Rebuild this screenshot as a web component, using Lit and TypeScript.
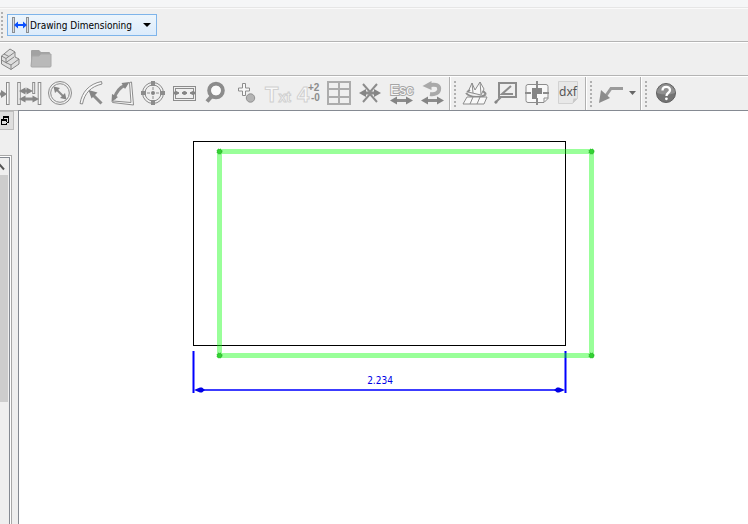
import { LitElement, html, svg, css, SVGTemplateResult } from "lit";
import { customElement, property } from "lit/decorators.js";

type Icon = { label: string; art: SVGTemplateResult };

/* Horizontal double-headed arrow between two x positions. */
const doubleArrow = (x1: number, x2: number, y: number, h = 4) => svg`
  <path class="line bold" d="M${x1 + 5} ${y}H${x2 - 5}"/>
  <path class="solid" d="M${x1} ${y}l${h + 3} ${-h}v${2 * h}zM${x2} ${y}l${-h - 3} ${-h}v${2 * h}z"/>`;

const dimensionIcons: Icon[] = [
  { label: "Linear dimension", art: svg`
    <path class="line bold" d="M16 17h5"/><path class="solid" d="M24 17l-6-4v8z"/>
    <rect class="hollow" x="23.5" y="5.5" width="2.6" height="22"/>` },
  { label: "Chained dimension", art: svg`
    <rect class="hollow" x="3.7" y="5.5" width="2.6" height="22"/>
    <rect class="hollow" x="24.2" y="5.5" width="2.6" height="22"/>
    <rect class="hollow" x="18.7" y="5.5" width="2" height="11"/>
    ${doubleArrow(5, 19, 14, 3.5)}${doubleArrow(5, 25, 22, 3.5)}` },
  { label: "Diameter", art: svg`
    <circle class="line" cx="15" cy="16" r="11.5"/><circle class="line" cx="15" cy="16" r="9.3"/>
    <path class="line thick" d="M10 11l10 10"/>
    <path class="solid" d="M8.5 9.5l6.5 1.5-5 5zM21.5 22.5l-6.5-1.5 5-5z"/>` },
  { label: "Radius", art: svg`
    <path class="hollow" d="M4 26.5C6 15 13 7 25.5 4.5l.5 2.5C15 9.5 8.5 16 6.5 27z"/>
    <path class="line bold" d="M25.5 26.5L17 18"/><path class="solid" d="M12.5 13l9 2.5-6 6z"/>` },
  { label: "Angle", art: svg`
    <path class="hollow" d="M22.5 5.5l2-.5 2 23-21-2.5.5-1.5 18 1.5z"/>
    <path class="line bold" d="M7 22C9 15 13 10 19 8"/>
    <path class="solid" d="M4.5 25l.5-8 6 3zM22.5 5l-8 1 3.5 6z"/>` },
  { label: "Center mark", art: svg`
    <circle class="line" cx="15" cy="16" r="10.5"/><circle class="line" cx="15" cy="16" r="8"/>
    <path class="line" d="M15 10v3M15 19v3M9 16h3M18 16h3"/>
    <path class="line heavy" d="M15 4v5M15 23v5M3 16h5M22 16h5"/><circle class="solid" cx="15" cy="16" r="2"/>` },
  { label: "Center line", art: svg`
    <rect class="line" x="4.5" y="9.5" width="22" height="14"/><rect class="line" x="6.5" y="11.5" width="18" height="10"/>
    <path class="line thick" d="M4 16h6m3 0h5m3 0h6"/>
    <circle class="solid" cx="7" cy="16" r="2"/><circle class="solid" cx="15.5" cy="16" r="2"/><circle class="solid" cx="24" cy="16" r="2"/>` },
  { label: "Weld symbol", art: svg`
    <path class="line heavy" d="M11 20l-4 4.5"/><circle class="line heavy" cx="16" cy="13.5" r="6.8"/>
    <circle class="shine" cx="16" cy="13.5" r="4.8"/>` },
  { label: "Add point", art: svg`
    <path class="hollow" d="M11.5 6.5h3v4.5h4v3h-4v4.5h-3v-4.5h-4v-3h4z"/>
    <circle class="soft" cx="19.5" cy="21" r="4.2"/>` },
  { label: "Add text", art: svg`
    <text class="ghost" x="3" y="25"><tspan class="large">T</tspan><tspan class="small">xt</tspan></text>` },
  { label: "Add tolerance", art: svg`
    <text x="4" y="25"><tspan class="ghost large">4</tspan><tspan class="tolerance" x="15" y="14">+2</tspan><tspan class="tolerance" x="18" y="24">-0</tspan></text>` },
  { label: "Table", art: svg`
    <path class="line grid" d="M4 5h22v22H4zM15 5v22M4 12h22M4 20h22"/>` },
  { label: "Delete dimension", art: svg`
    <path class="line thick" d="M8 7l7 8 7-8M8 25l7-8 7 8"/>${doubleArrow(4, 26, 16)}` },
  { label: "Escape dimensioning", art: svg`
    <text class="ghost escape" x="4" y="18">Esc</text>${doubleArrow(4, 27, 23.5)}` },
  { label: "Undo dimension", art: svg`
    <path class="line heavy pale" d="M13 8c6-1 10 0 9 5-1 4-6 4.5-9 4"/>
    <path class="solid pale" d="M5.5 9l9-5v9z"/>${doubleArrow(4, 27, 23.5)}` },
];

const annotationIcons: Icon[] = [
  { label: "Unfold", art: svg`
    <path class="hollow" d="M8 15l4-9 3 7 5-8 4 7-3 6z"/><path class="line" d="M12 6l1 10M20 5l1 12"/>
    <path class="line thick" d="M6 16c4 5 16 5 20 1M7 15l3-2M26 17l-3-3"/>
    <path class="hollow" d="M7 20h20l-3 7H3z"/><path class="line" d="M13 20l-3 7M20 20l-3 7"/>` },
  { label: "Shape view", art: svg`
    <path class="line thick" d="M8 6h17v14H8zM4 26l6-6"/><path class="line thick" d="M20 9l-9 8h11"/>
    <circle class="solid" cx="5" cy="25" r="1.5"/>` },
  { label: "Center view", art: svg`
    <path class="hollow" d="M6 7.500h18a2 2 0 0 1 2 2v12l-4 4H6a2 2 0 0 1-2-2v-14a2 2 0 0 1 2-2z"/>
    <path class="line" d="M26 21h-4v4"/>
    <path class="line thick" d="M15 4v7M15 21v7M3 16h6M21 16h6"/><path class="solid" d="M10 11h10v6h-5v5h-5z"/>` },
  { label: "Export DXF", art: svg`
    <path class="page" d="M5.5 4.5h19v17l-5 5h-14z"/><path class="fold" d="M24.5 21.5h-4l-1 5z"/>
    <text class="dxf" x="15" y="19">dxf</text>` },
];

@customElement("tool-icon")
class ToolIcon extends LitElement {
  @property({ attribute: false }) icon!: Icon;
  @property({ type: Boolean, reflect: true }) cut = false;

  static styles = css`
    :host { display: flex; flex: none; width: 31px; justify-content: flex-end; overflow: hidden; }
    :host([cut]) { width: 14px; }
    button { flex: none; width: 31px; height: 31px; padding: 0; border: 0; background: none; }
    svg { display: block; }
    .line { fill: none; stroke: #8c8c8c; stroke-width: 1; }
    .grid { stroke: #acacac; stroke-width: 2; }
    .thick { stroke-width: 2; }
    .bold { stroke-width: 3; }
    .heavy { stroke-width: 4; }
    .solid { fill: #858585; }
    .hollow { fill: #f8f8f8; stroke: #8c8c8c; }
    .soft { fill: #b4b4b4; stroke: #929292; }
    .fold { fill: #c8c8c8; }
    .shine { fill: #fafafa; }
    .page { fill: #e8e8e8; stroke: #d2d2d2; }
    .line.pale { stroke: #a9a9a9; }
    .solid.pale { fill: #a9a9a9; }
    text { font-family: "Liberation Sans", sans-serif; }
    .ghost { fill: #f8f8f8; stroke: #d0d0d0; font-weight: bold; }
    .large { font-size: 22px; }
    .small { font-size: 14px; }
    .escape { font-size: 14px; font-weight: normal; stroke: #a6a6a6; stroke-width: 2; paint-order: stroke; }
    .tolerance { font-size: 10px; font-weight: bold; fill: #8c8c8c; }
    .dxf { font: 12px "Noto Sans", sans-serif; fill: #555; text-anchor: middle; }
  `;

  render() {
    return html`<button aria-label=${this.icon.label}>
      <svg width="31" height="31" viewBox="0 1 31 31" aria-hidden="true">${this.icon.art}</svg>
    </button>`;
  }
}

@customElement("app-root")
class AppRoot extends LitElement {
  static styles = css`
    :host {
      display: flex; flex-direction: column; min-height: 100vh; overflow: hidden;
      background: #efefef; color: #000;
      font: 10px "DejaVu Sans Condensed", "DejaVu Sans", sans-serif;
    }
    * { box-sizing: border-box; }
    button { padding: 0; border: 0; background: none; }
    svg { display: block; }
    .menu-edge { height: 8px; background: #f5f6f7; border-bottom: 1px solid #e6e6e6; }
    .bar { display: flex; align-items: center; border-bottom: 1px solid #b4b4b4; }
    .workbench { height: 34px; border-top: 1px solid #fafafa; }
    .files { height: 34px; gap: 9px; border-top: 1px solid #fff; }
    .tools { height: 34px; border-top: 1px solid #fff; border-bottom: 0; }
    .grip {
      flex: none; width: 2px; height: 26px; margin: 0 4px 0 1px;
      background: repeating-linear-gradient(#b0b0b0 0 2px, transparent 2px 4px);
    }
    .tools .grip { margin: 0 4px 0 3px; }
    .divider { flex: none; align-self: stretch; width: 2px; margin-left: 1px; background: linear-gradient(90deg, #b0b0b0 50%, #fff 50%); }
    .picker {
      display: flex; align-items: center; width: 150px; height: 22px; padding: 0 5px 0 4px;
      border: 1px solid #7eb4ea; background: linear-gradient(#edf5fc, #dcebfb);
    }
    .picker select {
      flex: 1; min-width: 0; margin: 0; padding: 0 0 0 1px; border: 0; outline: 0;
      appearance: none; background: none; color: inherit; font: inherit;
    }
    .leader { display: flex; align-items: center; margin-left: 2px; }
    .canvas {
      flex: 1; min-width: 0; background: #fff;
      border-left: 1px solid #858a92; border-top: 1px solid #858a92;
    }
    .canvas svg { overflow: visible; }
    .main { display: flex; flex: 1; }
    .side { display: flex; flex-direction: column; flex: none; width: 18px; border-top: 1px solid #b4b4b4; }
    .restore {
      display: grid; place-items: center start; width: 14px; height: 19px; margin-bottom: 25px;
      background: #dedede; border: 1px solid #bdbdbd; border-left: 0;
    }
    .frame { flex: 1; width: 12px; padding: 1px 1px 0 0; border: 1px solid #a8a8a8; border-width: 1px 1px 0 0; background: #fff; }
    .scroll { height: 100%; border: 1px solid #858a92; border-width: 1px 1px 0 0; background: #efefef; padding-right: 1px; }
    .up { display: block; width: 8px; height: 17px; }
    .thumb { height: 227px; background: #cdcdcd; }
    .outline { fill: none; stroke: #000; stroke-width: 1; }
    .selection { fill: none; stroke: #00ff00; stroke-opacity: 0.4; stroke-width: 5; }
    .node { fill: #32d232; stroke: #24a824; stroke-dasharray: 1 1; }
    .dim { stroke: #0000ff; stroke-width: 2; fill: none; }
    .axis { stroke: #3c3cff; }
    .head { fill: #0000e6; }
    .measure { fill: #0000e6; text-anchor: middle; }
  `;

  render() {
    return html`
      <div class="menu-edge"></div>
      <div class="bar workbench">
        <span class="grip"></span>
        <label class="picker">
          <svg width="17" height="18" viewBox="0 0 17 18" aria-hidden="true">
            <path d="M1.5 1v16M15.5 1v16" stroke="#8b8e92" stroke-width="3"/>
            <path d="M1.5 2v14M15.5 2v14" stroke="#d8dce0"/>
            <path d="M5 9h7" stroke="#0a50ff" stroke-width="2"/>
            <path d="M2 9l4-3.5v7zM15 9l-4-3.5v7z" fill="#0a50ff"/>
          </svg>
          <select aria-label="Workbench"><option>Drawing Dimensioning</option></select>
          <svg width="8" height="4" viewBox="0 0 8 4" aria-hidden="true"><path d="M0 0h8L4 4z"/></svg>
        </label>
      </div>
      <div class="bar files">
        <button aria-label="Part">
          <svg width="20" height="24" viewBox="0 0 20 24" aria-hidden="true" fill="#dedede" stroke="#858585">
            <path d="M1.5 9L10 2l5 3v5l4 2v5l-8 5.5L1.5 17z"/>
            <path d="M1.5 9L6 11.5v4l5 2.5v4.5M6 11.5L15 5M6 15.5l8-5.5M11 18l8-6M4 7l5 2.5M1.5 13l5 3" fill="none"/>
          </svg>
        </button>
        <button aria-label="Open folder">
          <svg width="23" height="22" viewBox="0 0 23 22" aria-hidden="true">
            <path d="M2 3q0-1 1-1h7l2 2h8q1 0 1 1v14H2z" fill="#a2a2a2"/>
            <path d="M3 8h7l2-2h10v12q0 1-1 1H3q-1 0-1-1z" fill="#b9b9b9" stroke="#a8a8a8"/>
          </svg>
        </button>
      </div>
      <div class="bar tools">
        ${dimensionIcons.map((icon, i) => html`<tool-icon .icon=${icon} ?cut=${i === 0}></tool-icon>`)}
        <span class="divider"></span><span class="grip"></span>
        ${annotationIcons.map((icon) => html`<tool-icon .icon=${icon}></tool-icon>`)}
        <span class="divider"></span><span class="grip"></span>
        <button class="leader" aria-label="Leader line">
          <svg width="41" height="31" viewBox="0 1 41 31" aria-hidden="true">
            <path d="M25 11.5H13L7 20" fill="none" stroke="#9a9a9a" stroke-width="3"/>
            <path d="M1 26l2-13 9 8z" fill="#8c8c8c"/><path d="M31 14h7l-3.5 4z" fill="#666"/>
          </svg>
        </button>
        <span class="divider"></span><span class="grip"></span>
        <button aria-label="Help">
          <svg width="31" height="31" viewBox="0 1 31 31" aria-hidden="true">
            <circle cx="15" cy="16" r="9.5" fill="#747474" stroke="#606060"/>
            <path d="M6 16a9 9 0 0 1 18 0q-9 3-18 0z" fill="#909090"/>
            <path d="M11.5 13.5c0-5 7.5-4.500 7.5-.5 0 3-3.500 2.500-3.500 6" fill="none" stroke="#fff" stroke-width="2.3"/>
            <circle cx="15.4" cy="21.8" r="1.4" fill="#fff"/>
          </svg>
        </button>
      </div>
      <div class="main">
        <div class="side">
          <button class="restore" aria-label="Float panel">
            <svg width="10" height="10" viewBox="0 0 10 10" aria-hidden="true">
              <path d="M3 0h6v7H6V6h2V2H4v1H3zM1 3h6v6H1zm1 2v3h4V5z" fill-rule="evenodd"/>
            </svg>
          </button>
          <div class="frame"><div class="scroll">
            <button class="up" aria-label="Scroll up">
              <svg width="8" height="17" viewBox="0 0 8 17" aria-hidden="true"><path d="M-3 11L0 7l4 4.5" fill="none" stroke="#555" stroke-width="2"/></svg>
            </button>
            <div class="thumb"></div>
          </div></div>
        </div>
        <div class="canvas">
          <svg width="600" height="300" viewBox="0 0 600 300" role="img" aria-label="Dimensioned rectangle">
            <rect class="outline" x="174.5" y="30.5" width="372" height="204"/>
            <path class="dim" d="M174.5 240v42M546.5 240v42"/>
            <path class="dim axis" d="M180 279h362"/>
            <path class="head" d="M175 279l6-2.5h2l3 2.5-3 2.5h-2zM546 279l-6-2.5h-2l-3 2.5 3 2.5h2z"/>
            <text class="measure" x="361" y="273">2.234</text>
            <rect class="selection" x="200.5" y="40.5" width="372" height="204"/>
            ${[200.5, 572.5].map((x) => [40.5, 244.5].map((y) => svg`<circle class="node" cx=${x} cy=${y} r="2.5"/>`))}
          </svg>
        </div>
      </div>
    `;
  }
}
